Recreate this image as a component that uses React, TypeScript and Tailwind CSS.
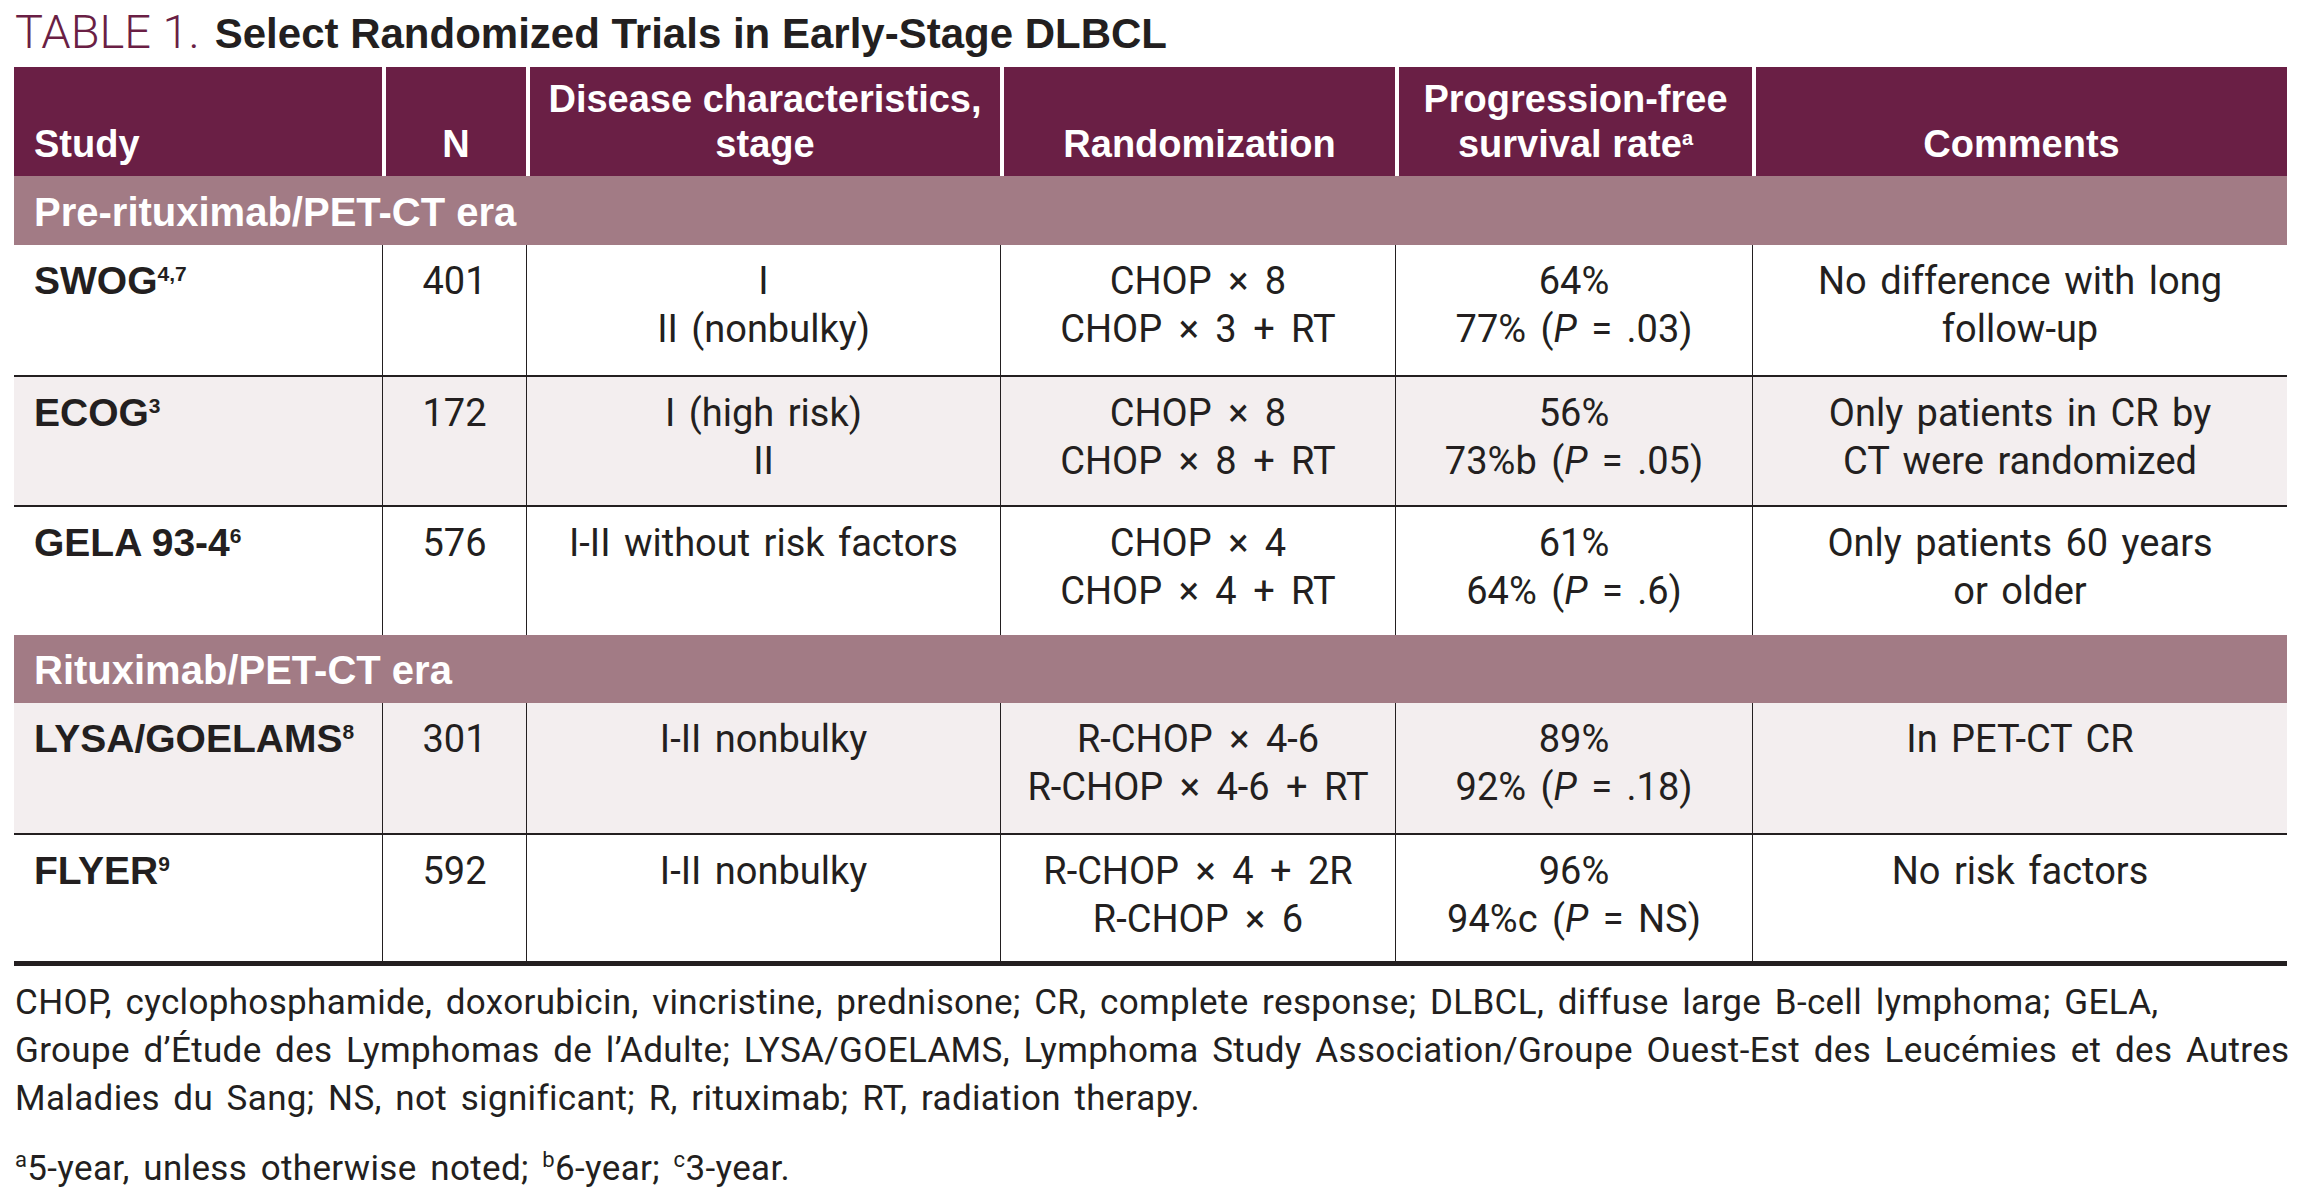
import React from "react";

const FONT = "[font-family:Roboto,'Liberation_Sans',sans-serif]";
const BOLD = "[font-family:'Liberation_Sans',Arial,sans-serif] font-bold";

const COLS = "grid grid-cols-[368px_144px_474px_395px_357px_535px]";

type Row = {
  study: string;
  sup: string;
  n: string;
  disease: React.ReactNode[];
  rand: React.ReactNode[];
  pfs: React.ReactNode[];
  comments: React.ReactNode[];
  shaded?: boolean;
  h: string;
  border: string;
};

const P = ({ v }: { v: string }) => (
  <>
    (<i>P</i> = {v})
  </>
);

function BodyRow({ r }: { r: Row }) {
  return (
    <div
      className={`${COLS} ${r.h} ${r.border} ${r.shaded ? "bg-[#f3eeef]" : "bg-white"} text-[38px] leading-[48px] text-[#231f20] [word-spacing:4px]`}
    >
      <div className={`${BOLD} text-[39px] pl-[20px] pt-[12px] whitespace-nowrap [word-spacing:0px]`}>
        {r.study}
        <sup className="text-[21px] top-[-0.6em]">{r.sup}</sup>
      </div>
      <div className="border-l border-[#231f20] pt-[12px] text-center">{r.n}</div>
      <div className="border-l border-[#231f20] pt-[12px] text-center">
        {r.disease.map((d, i) => (
          <div key={i}>{d}</div>
        ))}
      </div>
      <div className="border-l border-[#231f20] pt-[12px] text-center whitespace-nowrap [word-spacing:7px]">
        {r.rand.map((d, i) => (
          <div key={i}>{d}</div>
        ))}
      </div>
      <div className="border-l border-[#231f20] pt-[12px] text-center whitespace-nowrap [word-spacing:5px]">
        {r.pfs.map((d, i) => (
          <div key={i}>{d}</div>
        ))}
      </div>
      <div className="border-l border-[#231f20] pt-[12px] text-center">
        {r.comments.map((d, i) => (
          <div key={i}>{d}</div>
        ))}
      </div>
    </div>
  );
}

const pre: Row[] = [
  {
    study: "SWOG",
    sup: "4,7",
    n: "401",
    disease: ["I", "II (nonbulky)"],
    rand: ["CHOP × 8", "CHOP × 3 + RT"],
    pfs: ["64%", <>77% <P v=".03" /></>],
    comments: ["No difference with long", "follow-up"],
    h: "h-[132px]",
    border: "border-b-2 border-[#231f20]",
  },
  {
    study: "ECOG",
    sup: "3",
    n: "172",
    disease: ["I (high risk)", "II"],
    rand: ["CHOP × 8", "CHOP × 8 + RT"],
    pfs: ["56%", <>73%b <P v=".05" /></>],
    comments: ["Only patients in CR by", "CT were randomized"],
    shaded: true,
    h: "h-[130px]",
    border: "border-b-2 border-[#231f20]",
  },
  {
    study: "GELA 93-4",
    sup: "6",
    n: "576",
    disease: ["I-II without risk factors"],
    rand: ["CHOP × 4", "CHOP × 4 + RT"],
    pfs: ["61%", <>64% <P v=".6" /></>],
    comments: ["Only patients 60 years", "or older"],
    h: "h-[128px]",
    border: "",
  },
];

const post: Row[] = [
  {
    study: "LYSA/GOELAMS",
    sup: "8",
    n: "301",
    disease: ["I-II nonbulky"],
    rand: ["R-CHOP × 4-6", "R-CHOP × 4-6 + RT"],
    pfs: ["89%", <>92% <P v=".18" /></>],
    comments: ["In PET-CT CR"],
    shaded: true,
    h: "h-[132px]",
    border: "border-b-2 border-[#231f20]",
  },
  {
    study: "FLYER",
    sup: "9",
    n: "592",
    disease: ["I-II nonbulky"],
    rand: ["R-CHOP × 4 + 2R", "R-CHOP × 6"],
    pfs: ["96%", <>94%c <P v="NS" /></>],
    comments: ["No risk factors"],
    h: "h-[131px]",
    border: "border-b-[5px] border-[#231f20]",
  },
];

function Section({ label, h }: { label: string; h: string }) {
  return (
    <div className={`${h} ${BOLD} bg-[#a27b85] flex items-center pl-[20px] pt-[3px] text-white text-[40px] leading-[45px]`}>
      {label}
    </div>
  );
}

export default function App() {
  return (
    <div className={`${FONT} bg-white w-[2302px] h-[1204px] text-[#231f20]`}>
      <div className="h-[67px] pl-[15px] pt-[8px] flex items-baseline whitespace-nowrap">
        <span className="text-[47px] leading-none font-light text-[#6a1f45]">TABLE 1.</span>
        <span className={`${BOLD} ml-[15px] text-[42px] leading-none text-[#231f20]`}>
          Select Randomized Trials in Early-Stage DLBCL
        </span>
      </div>

      <div className="ml-[14px] w-[2273px]">
        <div className={`${COLS} ${BOLD} h-[109px] bg-[#6a1f45] text-white text-[38px] leading-[45px]`}>
          <div className="flex flex-col justify-end pb-[9px] pl-[20px]">Study</div>
          <div className="flex flex-col justify-end pb-[9px] text-center border-l-4 border-white">N</div>
          <div className="flex flex-col justify-end pb-[9px] text-center border-l-4 border-white">
            <div>Disease characteristics,</div>
            <div>stage</div>
          </div>
          <div className="flex flex-col justify-end pb-[9px] text-center border-l-4 border-white">Randomization</div>
          <div className="flex flex-col justify-end pb-[9px] text-center border-l-4 border-white">
            <div>Progression-free</div>
            <div>
              survival rate<sup className="text-[20px] top-[-0.6em]">a</sup>
            </div>
          </div>
          <div className="flex flex-col justify-end pb-[9px] text-center border-l-4 border-white">Comments</div>
        </div>

        <Section label="Pre-rituximab/PET-CT era" h="h-[69px]" />
        {pre.map((r) => (
          <BodyRow key={r.study} r={r} />
        ))}
        <Section label="Rituximab/PET-CT era" h="h-[68px]" />
        {post.map((r) => (
          <BodyRow key={r.study} r={r} />
        ))}
      </div>

      <div className="pl-[15px] pt-[13px] text-[35px] leading-[48px] text-[#231f20] whitespace-nowrap tracking-[0.35px] [word-spacing:4.5px]">
        <div>
          CHOP, cyclophosphamide, doxorubicin, vincristine, prednisone; CR, complete response; DLBCL, diffuse large B-cell lymphoma; GELA,
        </div>
        <div>
          Groupe d’Étude des Lymphomas de l’Adulte; LYSA/GOELAMS, Lymphoma Study Association/Groupe Ouest-Est des Leucémies et des Autres
        </div>
        <div>Maladies du Sang; NS, not significant; R, rituximab; RT, radiation therapy.</div>
        <div className="mt-[22px]">
          <sup className="text-[22px] top-[-0.6em]">a</sup>5-year, unless otherwise noted;{" "}
          <sup className="text-[22px] top-[-0.6em]">b</sup>6-year;{" "}
          <sup className="text-[22px] top-[-0.6em]">c</sup>3-year.
        </div>
      </div>
    </div>
  );
}
